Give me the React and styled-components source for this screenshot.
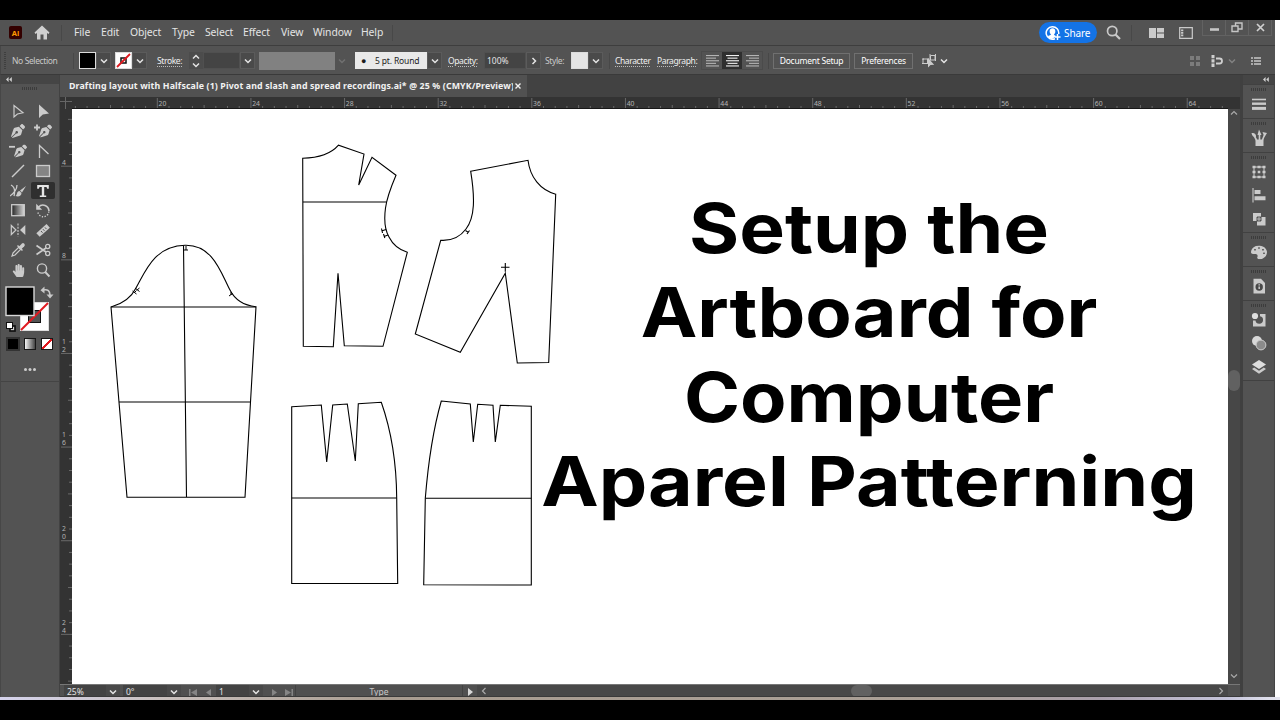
import styled, { createGlobalStyle, css } from "styled-components";
import { FaPenNib, FaHandPaper, FaPalette } from "react-icons/fa";

const menuItems = [
  { label: "File", width: 27 },
  { label: "Edit", width: 29 },
  { label: "Object", width: 42 },
  { label: "Type", width: 33 },
  { label: "Select", width: 38 },
  { label: "Effect", width: 38 },
  { label: "View", width: 32 },
  { label: "Window", width: 48 },
  { label: "Help", width: 31 },
];

const titleLines = [
  { text: "Setup the", stretch: 1.12 },
  { text: "Artboard for", stretch: 1.107 },
  { text: "Computer", stretch: 1.108 },
  { text: "Aparel Patterning", stretch: 1.124 },
];

const UNIT = 93.63;

const Chevron = ({ dir = "down", size = 8, color = "#e4e4e4", weight = 1.5 }) => {
  const angle = { down: 0, up: 180, left: 90, right: -90 }[dir];
  return (
    <svg width={size} height={size} viewBox="0 0 8 8">
      <path
        d="M1 2.5 4 5.5 7 2.5"
        fill="none"
        stroke={color}
        strokeWidth={weight}
        transform={`rotate(${angle} 4 4)`}
      />
    </svg>
  );
};

const DoubleArrow = () => (
  <svg width="6" height="5" viewBox="0 0 6 5" fill="#d0d0d0">
    <path d="M2.6 0v5L0 2.5zM5.8 0v5L3.2 2.5z" />
  </svg>
);

const Icon = ({ children, w = 16, h = 16 }) => (
  <svg
    width={w}
    height={h}
    viewBox={`0 0 ${w} ${h}`}
    fill="none"
    stroke="#cbcbcb"
    strokeWidth="1.3"
  >
    {children}
  </svg>
);

const Filled = ({ d, ...rest }) => <path d={d} fill="#cbcbcb" stroke="none" {...rest} />;

const tools = [
  <Icon key="direct">
    <path d="M4 2.5v11.5l3.4-3 5.6-1.2z" strokeWidth="1.2" />
  </Icon>,
  <Icon key="select">
    <Filled d="M4 1.5v13.5l3.8-3.6 6.2-1z" />
  </Icon>,
  <FaPenNib key="pen" size={14} />,
  <Icon key="add" w={18}>
    <FaPenNib x="5" y="1.5" size={13} color="#cbcbcb" />
    <path d="M0 4.5h6M3 1.5v6" strokeWidth="1.8" />
  </Icon>,
  <Icon key="remove" w={18}>
    <FaPenNib x="5" y="1.5" size={13} color="#cbcbcb" />
    <path d="M0 3.8h6" strokeWidth="1.8" />
  </Icon>,
  <Icon key="anchor">
    <path d="M4.5 15V2.5L13.5 11" />
  </Icon>,
  <Icon key="line">
    <path d="M2 14 14 2" strokeWidth="1.5" />
  </Icon>,
  <Icon key="rect">
    <rect x="1.5" y="2.5" width="13" height="11" fill="#858585" />
  </Icon>,
  <Icon key="shaper">
    <path d="M1 2c4 2 4 7 3 11M7 2C7 6 4 10 0 13" />
    <Filled d="M16 3 10 7.500l2 2zM9.500 8c-3 0-2 4-4 5 3 1 6 0 6-3z" />
  </Icon>,
  <Icon key="type">
    <Filled d="M2.200 2h11.600v3.800h-1.600L11.500 4H9.200v8.500h2V14H4.800v-1.500h2V4H4.500l-.7 1.800H2.200z" fill="#e6e6e6" />
  </Icon>,
  <Icon key="gradient">
    <defs>
      <linearGradient id="toolGradient">
        <stop offset="0" stopColor="#222" />
        <stop offset="1" stopColor="#d8d8d8" />
      </linearGradient>
    </defs>
    <rect x="1.7" y="2.7" width="12.6" height="11" fill="url(#toolGradient)" />
  </Icon>,
  <Icon key="rotate">
    <path d="M3.500 5c4-4 10-1.500 10.500 4" strokeWidth="1.600" />
    <Filled d="M1.200 1.800v6h6z" />
    <path d="M13.800 9.500A5.500 5.500 0 0 1 2.800 9" strokeDasharray="1.300 1.500" />
  </Icon>,
  <Icon key="reflect">
    <path d="M1.300 3.500v9L6 8z" strokeWidth="1.200" />
    <path d="M8 1.500v13" strokeDasharray="2 1.200" strokeWidth="1.100" />
    <Filled d="M15.300 3v10L10 8z" />
  </Icon>,
  <Icon key="measure">
    <path d="M3 13 13.200 3.800" strokeWidth="5" />
    <path d="m6 9 1.500 1.700M8 7.200 9.400 8.800M10 5.400l1.400 1.600" stroke="#535353" strokeWidth="1" />
  </Icon>,
  <Icon key="eyedropper">
    <path d="m3 11 6-6 2 2-6 6-3 1z" strokeWidth="1.200" />
    <path d="m10.500 5.500 2.500-2.500" strokeWidth="3.600" strokeLinecap="round" />
    <path d="m7.500 3.500 5 5" strokeWidth="1.500" />
  </Icon>,
  <Icon key="scissors">
    <path d="M1.500 3.500 11 10M1.500 12.500 11 6" strokeWidth="1.700" />
    <circle cx="12.700" cy="4.500" r="2.100" />
    <circle cx="12.700" cy="11.500" r="2.100" />
  </Icon>,
  <FaHandPaper key="hand" size={13} />,
  <Icon key="zoom">
    <circle cx="7" cy="6.500" r="4.600" strokeWidth="1.400" />
    <path d="m10.200 10 4.300 4.500" strokeWidth="1.900" />
  </Icon>,
];

const panels = [
  {
    height: 34,
    icons: [
      <Icon key="stroke">
        <path d="M1 3.500h14" strokeWidth="1.600" />
        <path d="M1 7.700h14" strokeWidth="2.400" />
        <path d="M1 12.400h14" strokeWidth="3" />
      </Icon>,
    ],
  },
  {
    height: 34,
    icons: [
      <Icon key="brushes" h={18}>
        <Filled d="M4.500 10.500h8v6.500h-8z" />
        <path d="M5.500 11 3 6.500M8.500 11V5M11.500 11l2-5" strokeWidth="1.600" />
        <Filled d="M.5 4c2-.5 5 .5 4.500 4C2.500 8 1 7 .5 4zM6.500 6 8 .5 10.500 6zM11.500 3l4.500 1-2.500 4z" />
      </Icon>,
    ],
  },
  {
    height: 80,
    icons: [
      <Icon key="transform">
        <path d="M3 3h10v10H3z" strokeWidth="1" />
        <path
          d="M1.500 3h3M6.500 3h3M11.500 3h3M1.500 8h3M6.700 8h2.600M11.500 8h3M1.500 13h3M6.500 13h3M11.500 13h3"
          strokeWidth="2.600"
        />
      </Icon>,
      <Icon key="align">
        <path d="M2 1v14.500" strokeWidth="1.100" />
        <Filled d="M3.500 3h6v4h-6zM3.500 9.300h11v4h-11z" />
      </Icon>,
      <Icon key="pathfinder">
        <Filled d="M2 2h8v4h4.500v8.500H6V10H2z" />
        <path d="M6 6h4v4H6z" fill="#535353" stroke="#535353" strokeWidth="1" />
        <path d="M7 7h2v2H7z" strokeWidth="0.800" />
      </Icon>,
    ],
  },
  {
    height: 34,
    icons: [
      <Icon key="color">
        <g transform="matrix(-1 0 0 0.860 16 1.500)">
          <FaPalette x="0" y="0" size={16} color="#cbcbcb" />
        </g>
      </Icon>,
    ],
  },
  {
    height: 34,
    icons: [
      <Icon key="info">
        <Filled d="M2.500.8H10L14 5v10.500H2.500z" />
        <circle cx="8.200" cy="9" r="3.700" fill="#484848" stroke="none" />
        <path d="M8.200 8.500V11M8.200 6.200v1.300" strokeWidth="1.500" />
      </Icon>,
    ],
  },
  {
    height: 81,
    icons: [
      <Icon key="appearance">
        <Filled d="M9 2h5.500v12.500H2V8.500h2.500a3.800 3.800 0 1 0 4.500-4.300z" />
        <circle cx="4" cy="4" r="3.100" fill="#dedede" stroke="none" />
      </Icon>,
      <Icon key="transparency">
        <circle cx="6" cy="6" r="5" fill="#d8d8d8" stroke="none" />
        <circle cx="10" cy="10" r="4.900" fill="#8b8b8b" strokeWidth="1" />
      </Icon>,
      <Icon key="layers">
        <Filled d="m8 1 7 4.500L8 10 1 5.500z" fill="#dedede" />
        <Filled d="M3.200 8.500 1 10l7 4.700L15 10l-2.200-1.500L8 11.700z" />
      </Icon>,
    ],
  },
];

const AlignLines = ({ anchor }) => {
  const widths = [13, 10, 13, 10, 13];
  return (
    <svg width="13" height="12" viewBox="0 0 13 12">
      {widths.map((w, i) => (
        <rect
          key={i}
          x={anchor === "left" ? 0 : anchor === "right" ? 13 - w : (13 - w) / 2}
          y={i * 2.6}
          width={w}
          height="1.100"
          fill={anchor === "center" ? "#f0f0f0" : "#b4b4b4"}
        />
      ))}
    </svg>
  );
};

const HorizontalRuler = () => {
  const ticks = [];
  for (let i = -7; i < 92; i++) {
    const x = 85.3 + (i * UNIT) / 8;
    if (x < 1 || x > 1155) continue;
    const h = i % 8 === 0 ? 11 : i % 4 === 0 ? 4 : 3;
    ticks.push(<path key={i} d={`M${x} ${12 - h}V12`} />);
  }
  return (
    <svg width="1156" height="12" viewBox="0 0 1156 12">
      <g stroke="#777" strokeWidth="0.800">{ticks}</g>
      {[20, 24, 28, 32, 36, 40, 44, 48, 52, 56, 60, 64].map((n, i) => (
        <RulerText key={n} x={86.5 + i * UNIT} y="8.800">
          {n}
        </RulerText>
      ))}
      <path d="M0 11.500H1156" stroke="#181818" />
    </svg>
  );
};

const VerticalRuler = () => {
  const ticks = [];
  for (let i = -4; i < 46; i++) {
    const y = 57.2 + (i * UNIT) / 8;
    if (y < 1 || y > 574) continue;
    const w = i % 8 === 0 ? 11 : i % 4 === 0 ? 4 : 3;
    ticks.push(<path key={i} d={`M${12 - w} ${y}H12`} />);
  }
  return (
    <svg width="12" height="575" viewBox="0 0 12 575">
      <g stroke="#777" strokeWidth="0.800">{ticks}</g>
      {["4", "8", "12", "16", "20", "24"].map((n, i) =>
        n.split("").map((c, j) => (
          <RulerText key={n + j} x="2" y={55.5 + i * UNIT - (n.length - 1 - j) * 8}>
            {c}
          </RulerText>
        ))
      )}
    </svg>
  );
};

// Pattern pieces are laid out in window coordinates, the view box starts at the artboard corner.
const PatternPieces = () => (
  <svg
    width="1156"
    height="575"
    viewBox="72 109 1156 575"
    fill="none"
    stroke="#000"
    strokeWidth="1.100"
  >
    <path d="M111 307C122 304 131 298 136 288C146 270 155 246 185 245.300C213 244.500 221 273 230 290C235 300 245 305.500 256 306.700L245 497.300H127z" />
    <path d="M111 307H256M119 402H250.500M183.500 245.500 186.500 497" />
    <path d="M183.500 250H188M186 246v4M132.500 291l4 3M134.500 292.500l2-2M135 288l4.500 3.500M137 290l2.500-2M229 296l3.500-2.500M231 295l0-3" strokeWidth="1" />

    <path d="M302.700 158.300C318 158 330 155 338.500 145.200L364 154 358.700 185 372 157.300 396 175.300C391 187 387 197 385.500 208C384 219 385 230 389 237C393 245 400 250 407.300 252.300L383 346.300 344.300 345.700 338 273.300 333.300 346.700 303.300 346.300z" />
    <path d="M303 202H386.500M381.500 231l4.500-1.500M381.500 228.500l1 4.500M384 236.500l4-1.500M383.500 234l1.300 4" />

    <path d="M470.700 171.300 528 160.300C530 177 540 190 555.700 194.200L548.700 362.500 517.300 363 505.300 273.300 460.300 352.300 415.300 334 440.700 240.300C451 241 460 237 466 229C475 217 475 198 470.700 171.300z" />
    <path d="M501 267.300h8.500M505.300 263v8.700M465.500 230.500l3 2M467 234l2.500-3.500" />

    <path d="M291.700 406.700 321.300 405 326.700 462 332.700 405 347.300 404 355.300 461 358.300 403.700 381.300 402.300C391 430 396.500 463 396.700 498.300L397.700 583.500H291.700z" />
    <path d="M291.700 498H396.700M425.300 498.300H531.300" />
    <path d="M441.300 401 470.300 404 473.300 442 477.700 404.300 493 405.300 495.300 442 500.300 405.300 531.300 406.300V585L423.700 584.700 425.300 498.300C428 465 433 430 441.300 401z" />
  </svg>
);

const MenuBar = () => (
  <TopBar>
    <AppLogo>Ai</AppLogo>
    <Slot $ml={12} $w={16}>
      <svg width="16" height="15" viewBox="0 0 16 15" fill="#cfcfcf">
        <path d="M8 .5.5 7.500 1.500 9 3 8v6.500h3.500v-5h3v5H13V8l1.500 1 1-1.500z" />
      </svg>
    </Slot>
    <Separator $ml={11} $mr={12} />
    {menuItems.map((item) => (
      <MenuItem key={item.label} $w={item.width}>
        {item.label}
      </MenuItem>
    ))}
    <Separator />
    <Spacer />
    <ShareButton>
      <svg width="16" height="16" viewBox="0 0 16 16" fill="none" stroke="#fff">
        <path d="M10 13.800A6.300 6.300 0 1 1 13.700 9" strokeWidth="1.500" />
        <path d="M7.500 3.200c3.700 0 3.400 5 1.500 6 0 1.500 2 1.200 2 2L7 14c-2 0-4-2-4-3 1.500-.7 3-.8 3-1.800C4 8 4 3.200 7.500 3.200z" fill="#fff" stroke="none" />
        <path d="M9.500 12h6M12.500 9v6" strokeWidth="1.500" />
      </svg>
      Share
    </ShareButton>
    <Slot $ml={9} $w={15}>
      <svg width="15" height="15" viewBox="0 0 15 15" fill="none" stroke="#c8c8c8">
        <circle cx="6.200" cy="6" r="4.700" strokeWidth="1.700" />
        <path d="m9.500 9.500 4.500 4.500" strokeWidth="2.200" />
      </svg>
    </Slot>
    <Separator $ml={10} $mr={17} />
    <Slot $w={15}>
      <svg width="15" height="12" viewBox="0 0 15 12" fill="#cacaca">
        <path d="M0 1h7v10H0zM8 1h7v4.500H8zM8 6.500h7V11H8z" />
      </svg>
    </Slot>
    <Slot $ml={15} $w={14}>
      <svg width="14" height="12" viewBox="0 0 14 12" fill="none" stroke="#cacaca">
        <path d="M.7.7h12.600v10.600H.7z" strokeWidth="1.200" />
        <path d="M3.200 2.500v7" strokeWidth="2.200" strokeDasharray="1.700 .8" />
      </svg>
    </Slot>
    <WindowControls>
      <WindowButton>
        <svg width="9" height="6">
          <path d="M0 4.500h9" stroke="#c6c6c6" strokeWidth="2.600" />
        </svg>
      </WindowButton>
      <WindowButton>
        <svg width="12" height="11" viewBox="0 0 12 11" fill="none" stroke="#c6c6c6" strokeWidth="1.400">
          <path d="M1 4h6v5.500H1zM4.500 4V1H11v6H7" />
        </svg>
      </WindowButton>
      <WindowButton>
        <svg width="9" height="9" viewBox="0 0 9 9" stroke="#d0d0d0" strokeWidth="1.700">
          <path d="m1 1 7 7M8 1 1 8" />
        </svg>
      </WindowButton>
    </WindowControls>
  </TopBar>
);

const ControlBar = () => (
  <Controls>
    <Slot $ml={2} $w={3}>
      <DotGrip />
    </Slot>
    <ControlText $ml={6} $w={61} $color="#c9c9c9">No Selection</ControlText>
    <Separator $mr={5} />
    <Swatch $bg="#000" />
    <DropButton><Chevron /></DropButton>
    <Swatch $ml={4} $bg="#fff">
      <svg width="15" height="15" viewBox="0 0 15 15" fill="none">
        <path d="M5 5h5v5H5z" stroke="#111" strokeWidth="1.500" />
        <path d="M1 14 14 1" stroke="#e0191f" strokeWidth="1.800" />
      </svg>
    </Swatch>
    <DropButton><Chevron /></DropButton>
    <ControlText $ml={10} $w={32} $linked>Stroke:</ControlText>
    <Stepper>
      <Chevron dir="up" />
      <Chevron />
    </Stepper>
    <Field $w={37} />
    <DropButton><Chevron /></DropButton>
    <ProfileBox />
    <DropButton $flat><Chevron color="#707070" /></DropButton>
    <BrushBox>
      <span>●</span>5 pt. Round
    </BrushBox>
    <DropButton><Chevron /></DropButton>
    <ControlText $ml={6} $w={36} $linked>Opacity:</ControlText>
    <Field $w={42}>100%</Field>
    <DropButton><Chevron dir="right" /></DropButton>
    <ControlText $ml={4} $w={26} $color="#c9c9c9">Style:</ControlText>
    <Swatch $bg="#e4e4e4" />
    <DropButton><Chevron /></DropButton>
    <Separator $ml={6} $mr={5} />
    <ControlText $w={42} $linked>Character</ControlText>
    <ControlText $w={44} $linked>Paragraph:</ControlText>
    <AlignGroup>
      <AlignButton><AlignLines anchor="left" /></AlignButton>
      <AlignButton $active><AlignLines anchor="center" /></AlignButton>
      <AlignButton><AlignLines anchor="right" /></AlignButton>
    </AlignGroup>
    <Separator $ml={5} $mr={4} />
    <BarButton $w={77}>Document Setup</BarButton>
    <BarButton $ml={4} $w={59}>Preferences</BarButton>
    <Slot $ml={9} $w={15}>
      <Icon w={15} h={14}>
        <path d="M1 5h4.500v4.500H1zM8.500 1.500H13V6H8.500zM0 5h2M5 5h2M0 9.500h6M8 0v7M13.500 0v7" strokeWidth="1" />
        <Filled d="M6 4v9.500l2.500-2.400 3.700-.3z" />
      </Icon>
    </Slot>
    <Slot $ml={3} $w={8}><Chevron /></Slot>
    <Spacer />
    <Slot $w={10}>
      <svg width="10" height="10" fill="#7c7c7c">
        <path d="M0 0h4v4H0zM6 0h4v4H6zM0 6h4v4H0zM6 6h4v4H6z" />
      </svg>
    </Slot>
    <Slot $ml={11} $w={13}>
      <svg width="13" height="12" viewBox="0 0 13 12" fill="none" stroke="#cfcfcf">
        <path d="M2 0v12" strokeWidth="3" strokeDasharray="3.300 1" />
        <path d="M5 3.500h3.500a2.500 2.500 0 0 1 0 5H5" strokeWidth="1.800" />
      </svg>
    </Slot>
    <Slot $ml={4} $w={8}><Chevron color="#828282" /></Slot>
    <Slot $ml={15} $w={10} $mr={14}>
      <svg width="10" height="8" viewBox="0 0 10 8" stroke="#c8c8c8">
        <path d="M0 1h2M3 1h7M0 4h2M3 4h7M0 7h2M3 7h7" strokeWidth="1.400" />
      </svg>
    </Slot>
  </Controls>
);

const Toolbox = () => (
  <ToolColumn>
    <CollapseRow><DoubleArrow /></CollapseRow>
    <Grip />
    <ToolGrid>
      {tools.map((tool) => (
        <ToolButton key={tool.key} $active={tool.key === "type"}>
          {tool}
        </ToolButton>
      ))}
    </ToolGrid>
    <ColorWell viewBox="0 0 56 50" width="56" height="50">
      <rect x="17.500" y="18.500" width="28" height="28" fill="#fff" stroke="#ddd" />
      <rect x="25.500" y="26.500" width="12" height="12" fill="#535353" stroke="#111" />
      <path d="m18 46 27-27" stroke="#e0191f" strokeWidth="2" />
      <rect x="3" y="3" width="28" height="28.500" fill="#000" stroke="#d8d8d8" strokeWidth="1.400" />
      <path d="M40 6c5-1 7 1 7 5.500" fill="none" stroke="#c8c8c8" strokeWidth="1.700" />
      <path d="m41.500 2.500-4 3.700 4 3.300zM43.500 10.500h7l-3.500 4z" fill="#c8c8c8" />
      <rect x="7" y="42" width="5" height="5" fill="#ccc" stroke="#111" strokeWidth="1.700" />
      <rect x="3.500" y="38.500" width="6" height="6" fill="#fff" stroke="#111" />
    </ColorWell>
    <ModeRow>
      <ModeButton $active $fill="#000" />
      <ModeButton $fill="linear-gradient(90deg, #f5f5f5, #444)" />
      <ModeButton $fill="linear-gradient(135deg, #fff 41%, #e0191f 42%, #e0191f 58%, #fff 59%)" />
    </ModeRow>
    <MoreTools>
      <svg width="12" height="3" fill="#cdcdcd">
        <circle cx="1.500" cy="1.500" r="1.500" />
        <circle cx="6" cy="1.500" r="1.500" />
        <circle cx="10.500" cy="1.500" r="1.500" />
      </svg>
    </MoreTools>
  </ToolColumn>
);

const StatusBar = () => (
  <Status>
    <StatusField $ml={4} $w={42}>25%</StatusField>
    <StatusDrop><Chevron /></StatusDrop>
    <StatusField $ml={3} $w={44}>0°</StatusField>
    <StatusDrop><Chevron /></StatusDrop>
    <StatusIcon $ml={3} $w={17}>
      <svg width="8" height="7" fill="#858585"><path d="M0 0h1.500v7H0zM8 0v7L2 3.500z" /></svg>
    </StatusIcon>
    <StatusIcon $w={14}>
      <svg width="5" height="7" fill="#858585"><path d="M5 0v7L0 3.500z" /></svg>
    </StatusIcon>
    <StatusField $ml={1} $w={33}>1</StatusField>
    <StatusDrop><Chevron /></StatusDrop>
    <StatusIcon $ml={4} $w={15}>
      <svg width="5" height="7" fill="#858585"><path d="M0 0v7l5-3.500z" /></svg>
    </StatusIcon>
    <StatusIcon $w={13}>
      <svg width="8" height="7" fill="#858585"><path d="M6.500 0H8v7H6.500zM0 0v7l6-3.500z" /></svg>
    </StatusIcon>
    <CurrentTool>Type</CurrentTool>
    <StatusIcon $w={14}>
      <svg width="5" height="8" fill="#d8d8d8"><path d="M0 0v8l5-4z" /></svg>
    </StatusIcon>
    <HorizontalScroll>
      <Chevron dir="left" color="#aaa" weight={1.2} />
      <HorizontalThumb />
      <Chevron dir="right" color="#aaa" weight={1.2} />
    </HorizontalScroll>
    <ScrollCorner />
  </Status>
);

export default function App() {
  return (
    <>
      <GlobalStyle />
      <Screen>
        <AppWindow>
          <MenuBar />
          <ControlBar />
          <Workspace>
            <Toolbox />
            <Document>
              <TabRow>
                <DocumentTab>
                  <TabTitle>
                    Drafting layout with Halfscale (1) Pivot and slash and spread recordings.ai* @ 25 % (CMYK/Preview)
                  </TabTitle>
                  <svg width="6" height="6" stroke="#f0f0f0" strokeWidth="1.400">
                    <path d="m.5.5 5 5M5.500.5l-5 5" />
                  </svg>
                </DocumentTab>
              </TabRow>
              <RulerRow>
                <RulerCorner />
                <HorizontalRuler />
              </RulerRow>
              <CanvasRow>
                <RulerColumn><VerticalRuler /></RulerColumn>
                <Artboard>
                  <PatternPieces />
                  <Title>
                    {titleLines.map((line) => (
                      <TitleLine key={line.text} $stretch={line.stretch}>
                        {line.text}
                      </TitleLine>
                    ))}
                  </Title>
                </Artboard>
                <VerticalScroll>
                  <Chevron dir="up" color="#aaa" weight={1.2} />
                  <VerticalThumb />
                  <Chevron color="#aaa" weight={1.2} />
                </VerticalScroll>
              </CanvasRow>
              <StatusBar />
            </Document>
            <Dock>
              <CollapseRow $right><DoubleArrow /></CollapseRow>
              {panels.map((panel, i) => (
                <DockPanel key={i} $h={panel.height}>
                  <Grip />
                  {panel.icons.map((icon) => (
                    <DockIcon key={icon.key}>{icon}</DockIcon>
                  ))}
                </DockPanel>
              ))}
            </Dock>
          </Workspace>
        </AppWindow>
        <DesktopEdge />
      </Screen>
    </>
  );
}

const GlobalStyle = createGlobalStyle`
  * {
    box-sizing: border-box;
  }
  body {
    margin: 0;
    background: #000;
    overflow: hidden;
  }
  svg {
    display: block;
    flex: none;
  }
`;

const center = css`
  display: flex;
  align-items: center;
  justify-content: center;
`;

const Screen = styled.div`
  width: 1280px;
  height: 720px;
  padding: 20px 0;
  background: #000;
  font-family: "Noto Sans", sans-serif;
  color: #e4e4e4;
`;

const AppWindow = styled.div`
  height: 677px;
  border-right: 5px solid #fff;
  background: #535353;
`;

const DesktopEdge = styled.div`
  height: 3px;
  background: linear-gradient(90deg, #d5d3ec 0, #c9c0bd 13%, #a89c90 30%, #aaa097 75%, #aaa0ac 86%, #c5c4da 96%, #e6e6f0);
`;

const TopBar = styled.div`
  display: flex;
  align-items: center;
  height: 26px;
  padding-left: 9px;
  border-bottom: 1px solid #3e3e3e;
`;

const Slot = styled.div`
  ${center}
  flex: none;
  width: ${(p) => p.$w}px;
  margin-left: ${(p) => p.$ml || 0}px;
  margin-right: ${(p) => p.$mr || 0}px;
`;

const Spacer = styled.div`
  flex: 1;
`;

const AppLogo = styled.div`
  ${center}
  width: 13px;
  height: 13px;
  border-radius: 2px;
  background: #300;
  color: #ff9a00;
  font-size: 7.5px;
  font-weight: 700;
`;

const Separator = styled.div`
  flex: none;
  width: 1px;
  height: 16px;
  margin-left: ${(p) => p.$ml || 0}px;
  margin-right: ${(p) => p.$mr || 0}px;
  background: #484848;
`;

const MenuItem = styled.div`
  flex: none;
  width: ${(p) => p.$w}px;
  margin-top: -2px;
  font-size: 10.4px;
  letter-spacing: -0.12px;
  white-space: nowrap;
`;

const ShareButton = styled.div`
  display: flex;
  align-items: center;
  gap: 3px;
  width: 58px;
  height: 21px;
  padding-left: 6px;
  border-radius: 11px;
  background: #1473e6;
  color: #fff;
  font-size: 10px;
  letter-spacing: -0.1px;
`;

const WindowControls = styled.div`
  display: flex;
  align-self: flex-start;
  width: 70px;
  height: 16px;
  margin: 0 3px 0 9px;
  border: 1px solid #626262;
  border-top: 0;
`;

const WindowButton = styled.div`
  ${center}
  flex: 1;
  & + & {
    border-left: 1px solid #626262;
  }
`;

const Controls = styled.div`
  display: flex;
  align-items: center;
  height: 29px;
  padding-top: 1px;
  border-bottom: 1px solid #3a3a3a;
  border-left: 1px solid #474747;
`;

const DotGrip = styled.div`
  width: 2px;
  height: 18px;
  background: repeating-linear-gradient(#3f3f3f 0 1px, transparent 1px 2px);
`;

const ControlText = styled.div`
  flex: none;
  width: ${(p) => p.$w}px;
  margin-left: ${(p) => p.$ml || 0}px;
  color: ${(p) => p.$color || "#efefef"};
  font-size: 8.5px;
  letter-spacing: -0.38px;
  line-height: 10px;
  white-space: nowrap;
  ${(p) =>
    p.$linked &&
    css`
      text-decoration: underline dotted #bbb 1px;
      text-underline-offset: 2px;
    `}
`;

const Swatch = styled.div`
  flex: none;
  width: 17px;
  height: 17px;
  margin-left: ${(p) => p.$ml || 0}px;
  border: 1px solid #dcdcdc;
  background: ${(p) => p.$bg};
`;

const DropButton = styled.div`
  ${center}
  flex: none;
  width: ${(p) => (p.$flat ? 14 : 15)}px;
  height: 17px;
  background: ${(p) => (p.$flat ? "transparent" : "#4a4a4a")};
  box-shadow: ${(p) => (p.$flat ? "none" : "inset 0 0 0 1px #5b5b5b")};
`;

const Stepper = styled.div`
  ${center}
  flex-direction: column;
  width: 14px;
  height: 17px;
  background: #4c4c4c;
`;

const Field = styled.div`
  display: flex;
  align-items: center;
  flex: none;
  width: ${(p) => p.$w}px;
  height: 17px;
  margin-left: ${(p) => p.$ml || 0}px;
  padding-left: 2px;
  background: #444;
  border: 1px solid #505050;
  font-size: 8.5px;
`;

const ProfileBox = styled.div`
  width: 76px;
  height: 18px;
  margin-left: 4px;
  background: #818181;
`;

const BrushBox = styled.div`
  display: flex;
  align-items: center;
  width: 72px;
  height: 17px;
  margin-left: 6px;
  padding-left: 6px;
  background: #e9e9e9;
  color: #1c1c1c;
  font-size: 8.5px;
  letter-spacing: -0.15px;
  white-space: nowrap;
  span {
    width: 14px;
    font-size: 9px;
  }
`;

const AlignGroup = styled.div`
  display: flex;
  height: 19px;
  border: 1px solid #4b4b4b;
`;

const AlignButton = styled.div`
  ${center}
  width: 20px;
  background: ${(p) => (p.$active ? "#2f2f2f" : "transparent")};
`;

const BarButton = styled.div`
  ${center}
  flex: none;
  width: ${(p) => p.$w}px;
  height: 16px;
  margin-left: ${(p) => p.$ml || 0}px;
  border: 1px solid #707070;
  color: #fff;
  font-size: 8.5px;
  letter-spacing: -0.25px;
  white-space: nowrap;
`;

const Workspace = styled.div`
  display: flex;
  height: 622px;
`;

const ToolColumn = styled.div`
  width: 60px;
  border-right: 1px solid #424242;
  border-left: 1px solid #474747;
`;

const CollapseRow = styled.div`
  display: flex;
  align-items: center;
  justify-content: ${(p) => (p.$right ? "flex-end" : "flex-start")};
  height: 9px;
  padding: 0 5px;
  background: #454545;
`;

const Grip = styled.div`
  width: 16px;
  height: 3px;
  margin: 3px auto 0;
  background: repeating-linear-gradient(90deg, #3c3c3c 0 1px, transparent 1px 2px);
`;

const ToolGrid = styled.div`
  display: grid;
  grid-template-columns: repeat(2, 24.5px);
  grid-auto-rows: 19.9px;
  padding: 11px 0 0 5px;
  color: #cbcbcb;
`;

const ToolButton = styled.div`
  ${center}
  margin: 1px 0;
  border-radius: 2px;
  background: ${(p) => (p.$active ? "#2f2f2f" : "transparent")};
`;

const ColorWell = styled.svg`
  margin: 4px 0 0 2px;
`;

const ModeRow = styled.div`
  display: flex;
  gap: 3px;
  padding: 3px 0 0 5px;
`;

const ModeButton = styled.div`
  width: 14px;
  height: 14px;
  border: 2px solid ${(p) => (p.$active ? "#333" : "#535353")};
  background: ${(p) => p.$fill} padding-box;
  outline: ${(p) => (p.$active ? "none" : "1px solid #181818")};
  outline-offset: -2px;
`;

const MoreTools = styled.div`
  display: flex;
  justify-content: center;
  height: 31px;
  padding-top: 17px;
  border-bottom: 1px solid #444;
`;

const Document = styled.div`
  display: flex;
  flex-direction: column;
  width: 1183px;
  border-right: 3px solid #404040;
`;

const TabRow = styled.div`
  height: 22px;
  background: #424242;
`;

const DocumentTab = styled.div`
  display: flex;
  align-items: center;
  gap: 2px;
  width: 467px;
  height: 22px;
  padding-left: 9px;
  background: #515151;
`;

const TabTitle = styled.div`
  width: 444px;
  overflow: hidden;
  color: #f2f2f2;
  font-size: 8.8px;
  font-weight: 700;
  letter-spacing: 0.13px;
  white-space: nowrap;
`;

const RulerRow = styled.div`
  display: flex;
  height: 12px;
  background: #333;
`;

const RulerCorner = styled.div`
  width: 12px;
  height: 12px;
  background: linear-gradient(#666, #666) 0 4px / 12px 1px no-repeat,
    linear-gradient(#666, #666) 5px 0 / 1px 12px no-repeat;
`;

const RulerText = styled.text`
  fill: #b4b4b4;
  font-size: 6.8px;
`;

const CanvasRow = styled.div`
  display: flex;
  height: 575px;
`;

const RulerColumn = styled.div`
  width: 12px;
  background: #333;
`;

const Artboard = styled.div`
  position: relative;
  width: 1156px;
  background: #fff;
`;

const Title = styled.div`
  position: absolute;
  top: 78px;
  left: 397px;
  width: 800px;
  color: #000;
  font-family: Inter, sans-serif;
  font-size: 68.5px;
  font-weight: 700;
  line-height: 84.4px;
  text-align: center;
`;

const TitleLine = styled.div`
  white-space: nowrap;
  transform: scaleX(${(p) => p.$stretch});
`;

const VerticalScroll = styled.div`
  display: flex;
  flex-direction: column;
  align-items: center;
  justify-content: space-between;
  width: 12px;
  padding-bottom: 4px;
  background: #474747;
`;

const VerticalThumb = styled.div`
  width: 12px;
  height: 21px;
  margin-top: -28px;
  border-radius: 6px;
  background: #616161;
`;

const Status = styled.div`
  display: flex;
  align-items: center;
  height: 13px;
  border-top: 1px solid #777;
  border-bottom: 1px solid #3a3a3a;
  background: #505050;
  font-size: 8.5px;
  overflow: hidden;
`;

const StatusField = styled.div`
  flex: none;
  width: ${(p) => p.$w}px;
  height: 13px;
  margin-left: ${(p) => p.$ml || 0}px;
  padding-left: 3px;
  background: #434343;
  line-height: 16px;
`;

const StatusDrop = styled.div`
  ${center}
  flex: none;
  width: 14px;
  height: 13px;
  padding-top: 3px;
  background: #494949;
`;

const StatusIcon = styled.div`
  ${center}
  flex: none;
  width: ${(p) => p.$w}px;
  margin-left: ${(p) => p.$ml || 0}px;
  padding-top: 3px;
`;

const CurrentTool = styled.div`
  width: 168px;
  height: 13px;
  border-left: 1px solid #424242;
  border-right: 1px solid #424242;
  color: #c8c8c8;
  line-height: 16px;
  text-align: center;
`;

const HorizontalScroll = styled.div`
  display: flex;
  align-items: center;
  justify-content: space-between;
  flex: 1;
  height: 12px;
  padding: 0 3px;
  background: #484848;
`;

const HorizontalThumb = styled.div`
  width: 21px;
  height: 12px;
  margin-left: 17px;
  border-radius: 6px;
  background: #616161;
`;

const ScrollCorner = styled.div`
  width: 12px;
  height: 12px;
`;

const Dock = styled.div`
  flex: 1;
  border-right: 1px solid #444;
`;

const DockPanel = styled.div`
  height: ${(p) => p.$h}px;
  border-top: 1px solid #414141;
  &:last-child {
    border-bottom: 1px solid #414141;
  }
`;

const DockIcon = styled.div`
  ${center}
  height: 23.5px;
  padding-top: 2px;
  color: #cbcbcb;
`;
